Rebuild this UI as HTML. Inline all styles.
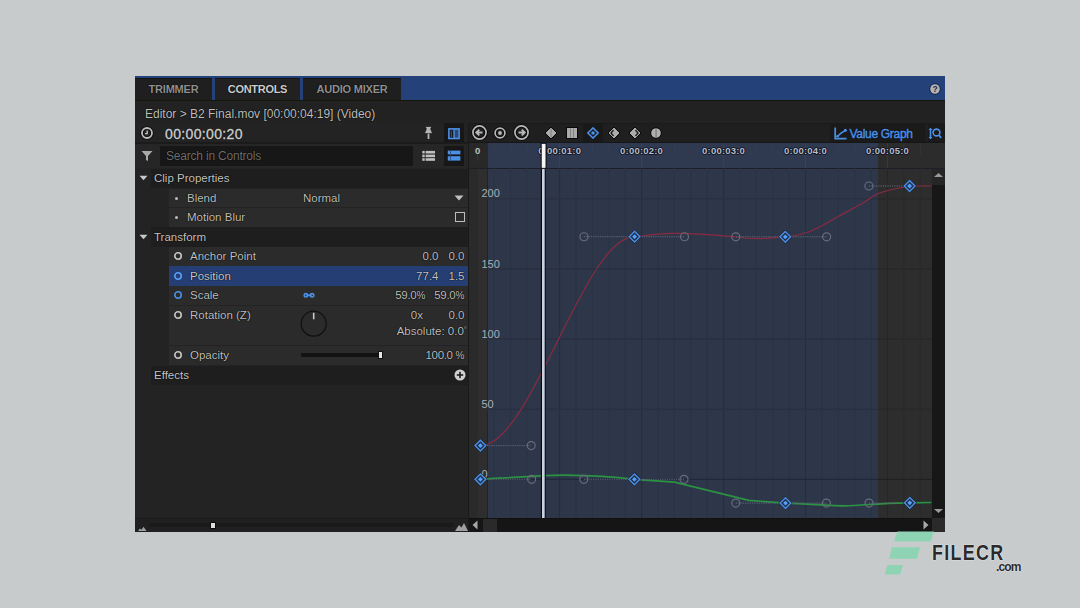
<!DOCTYPE html>
<html><head><meta charset="utf-8"><style>
html,body{margin:0;padding:0;}
body{width:1080px;height:608px;overflow:hidden;position:relative;background:#c8cbcb;font-family:"Liberation Sans", sans-serif;}
div.t{text-shadow:0 0 1px #000,0 0 1px #000;}
</style></head><body>
<div style="position:absolute;left:135px;top:76px;width:810px;height:456px;background:#232323;"></div>
<div style="position:absolute;left:135px;top:76px;width:810px;height:24px;background:#25417a;"></div>
<div style="position:absolute;left:135px;top:78px;width:77px;height:22px;background:#1f1f1f;border-top:1px solid #141414;box-sizing:border-box"></div>
<div style="position:absolute;left:215px;top:78px;width:85px;height:22px;background:#212121;border-top:1px solid #141414;box-sizing:border-box"></div>
<div style="position:absolute;left:303px;top:78px;width:98px;height:22px;background:#1f1f1f;border-top:1px solid #141414;box-sizing:border-box"></div>
<div class="t" style="position:absolute;left:135px;top:79px;height:21px;line-height:21px;width:77px;font-size:11px;font-weight:700;color:#8f8f8f;text-align:center;white-space:nowrap;letter-spacing:-0.2px">TRIMMER</div>
<div class="t" style="position:absolute;left:215px;top:79px;height:21px;line-height:21px;width:85px;font-size:11px;font-weight:700;color:#cdcdcd;text-align:center;white-space:nowrap;letter-spacing:-0.3px">CONTROLS</div>
<div class="t" style="position:absolute;left:303px;top:79px;height:21px;line-height:21px;width:98px;font-size:11px;font-weight:700;color:#8f8f8f;text-align:center;white-space:nowrap;letter-spacing:-0.2px">AUDIO MIXER</div>
<svg style="position:absolute;left:927.5px;top:81.75px" width="14" height="14" viewBox="0 0 14 14"><circle cx="7" cy="7" r="5.8" fill="#12235a"/><circle cx="7" cy="7" r="4.8" fill="#b4b4ae"/><text x="7" y="10.2" font-size="8.5" font-weight="700" text-anchor="middle" fill="#1c2a55" font-family="Liberation Sans">?</text></svg>
<div style="position:absolute;left:135px;top:100px;width:810px;height:23px;background:#222222;"></div>
<div style="position:absolute;left:135px;top:100px;width:810px;height:1px;background:#17160f;"></div>
<div class="t" style="position:absolute;left:145px;top:103px;height:22px;line-height:22px;font-size:12px;font-weight:400;color:#bdbdbd;text-align:left;white-space:nowrap;">Editor &gt; B2 Final.mov [00:00:04:19] (Video)</div>
<div style="position:absolute;left:135px;top:123px;width:333px;height:20px;background:#232323;"></div>
<div style="position:absolute;left:135px;top:142px;width:333px;height:2px;background:#1b1b1b;"></div>
<svg style="position:absolute;left:140px;top:126px" width="14" height="14" viewBox="0 0 14 14"><circle cx="7" cy="7" r="5" fill="none" stroke="#0a0a0a" stroke-width="3.6"/><circle cx="7" cy="7" r="5" fill="none" stroke="#bdbdbd" stroke-width="1.8"/><path d="M7.2 4.6 V7.6 H5" fill="none" stroke="#bdbdbd" stroke-width="1.4"/></svg>
<div class="t" style="position:absolute;left:165px;top:123.5px;height:20px;line-height:20px;font-size:14px;font-weight:400;color:#cfcfcf;text-align:left;white-space:nowrap;letter-spacing:0.35px;-webkit-text-stroke:0.35px #cfcfcf">00:00:00:20</div>
<svg style="position:absolute;left:423px;top:125px" width="11" height="15" viewBox="0 0 11 15"><path d="M2.2 1.5 H8.8 L7.6 4 L9.6 8.6 H1.4 L3.4 4 Z" fill="#b4b4b4" stroke="#0e0e0e" stroke-width="0.6"/><rect x="4.6" y="8.6" width="1.8" height="5.4" fill="#b4b4b4"/></svg>
<div style="position:absolute;left:444px;top:123px;width:20px;height:19px;background:#171717;"></div>
<svg style="position:absolute;left:447px;top:127px" width="14" height="13" viewBox="0 0 14 13"><rect x="7" y="1.5" width="4.5" height="9.5" fill="#2c4a78"/><rect x="1.9" y="1.9" width="10.2" height="9.6" fill="none" stroke="#4a90e6" stroke-width="1.6"/><rect x="6.3" y="2" width="1.4" height="9.4" fill="#4a90e6"/><rect x="3.8" y="3.5" width="1" height="6.5" fill="#3a5a8a"/></svg>
<div style="position:absolute;left:135px;top:144px;width:333px;height:24px;background:#262626;"></div>
<svg style="position:absolute;left:140px;top:149px" width="14" height="13" viewBox="0 0 14 13"><path d="M1.5 2 H12.5 L8 7 V12 L6 11 V7 Z" fill="#a9a9a9"/></svg>
<div style="position:absolute;left:160px;top:146px;width:253px;height:20px;background:#171717;"></div>
<div class="t" style="position:absolute;left:166px;top:146px;height:20px;line-height:20px;font-size:12px;font-weight:400;color:#6e6e6e;text-align:left;white-space:nowrap;letter-spacing:-0.2px">Search in Controls</div>
<svg style="position:absolute;left:421px;top:149px" width="15" height="13" viewBox="0 0 15 13"><rect x="1.3" y="1.9" width="2.4" height="2.6" fill="#c0c0c0"/><rect x="4.6" y="1.9" width="9.4" height="2.6" fill="#c0c0c0"/><rect x="1.3" y="5.6" width="2.4" height="2.6" fill="#c0c0c0"/><rect x="4.6" y="5.6" width="9.4" height="2.6" fill="#c0c0c0"/><rect x="1.3" y="9.2" width="2.4" height="2.6" fill="#c0c0c0"/><rect x="4.6" y="9.2" width="9.4" height="2.6" fill="#c0c0c0"/></svg>
<div style="position:absolute;left:444px;top:146px;width:20px;height:20px;background:#171717;"></div>
<svg style="position:absolute;left:447px;top:149px" width="15" height="13" viewBox="0 0 15 13"><rect x="0.8" y="1.6" width="12.6" height="3.8" fill="#4a90e6"/><rect x="0.8" y="7.2" width="12.6" height="4.4" fill="#4a90e6"/><rect x="3" y="1.6" width="0.8" height="10" fill="#2a4a78"/></svg>
<div style="position:absolute;left:151px;top:169px;width:317px;height:19px;background:#1e1e1e;"></div>
<svg style="position:absolute;left:139px;top:175px" width="9" height="6" viewBox="0 0 9 6"><path d="M0.5 0.8 H8.5 L4.5 5.2 Z" fill="#c8c8c8"/></svg>
<div class="t" style="position:absolute;left:154px;top:169px;height:19px;line-height:19px;font-size:11.5px;font-weight:400;color:#c2c2c2;text-align:left;white-space:nowrap;">Clip Properties</div>
<div style="position:absolute;left:169px;top:189px;width:299px;height:18px;background:#2b2b2b;"></div>
<div style="position:absolute;left:175px;top:196.5px;width:3px;height:3px;background:#bbbbbb;border-radius:50%"></div>
<div class="t" style="position:absolute;left:187px;top:189px;height:18px;line-height:18px;font-size:11.5px;font-weight:400;color:#bebebe;text-align:left;white-space:nowrap;">Blend</div>
<div class="t" style="position:absolute;left:303px;top:189px;height:18px;line-height:18px;font-size:11.5px;font-weight:400;color:#bebebe;text-align:left;white-space:nowrap;">Normal</div>
<svg style="position:absolute;left:454px;top:195px" width="10" height="6" viewBox="0 0 10 6"><path d="M0.5 0.5 H9.5 L5 5.5 Z" fill="#c0c0c0"/></svg>
<div style="position:absolute;left:169px;top:208px;width:299px;height:19px;background:#2b2b2b;"></div>
<div style="position:absolute;left:175px;top:215.5px;width:3px;height:3px;background:#bbbbbb;border-radius:50%"></div>
<div class="t" style="position:absolute;left:187px;top:208px;height:19px;line-height:19px;font-size:11.5px;font-weight:400;color:#bebebe;text-align:left;white-space:nowrap;">Motion Blur</div>
<div style="position:absolute;left:455px;top:212px;width:10px;height:10px;background:transparent;box-sizing:border-box;border:1.3px solid #bdbdbd"></div>
<div style="position:absolute;left:151px;top:227px;width:317px;height:20px;background:#1e1e1e;"></div>
<svg style="position:absolute;left:139px;top:234px" width="9" height="6" viewBox="0 0 9 6"><path d="M0.5 0.8 H8.5 L4.5 5.2 Z" fill="#c8c8c8"/></svg>
<div class="t" style="position:absolute;left:154px;top:227px;height:20px;line-height:20px;font-size:11.5px;font-weight:400;color:#c2c2c2;text-align:left;white-space:nowrap;">Transform</div>
<div style="position:absolute;left:169px;top:247px;width:299px;height:19px;background:#2b2b2b;"></div>
<svg style="position:absolute;left:173px;top:251px" width="10" height="10" viewBox="0 0 10 10"><circle cx="5" cy="5" r="3.2" fill="none" stroke="#c6c6c6" stroke-width="1.6"/></svg>
<div class="t" style="position:absolute;left:190px;top:247px;height:19px;line-height:19px;font-size:11.5px;font-weight:400;color:#bebebe;text-align:left;white-space:nowrap;">Anchor Point</div>
<div class="t" style="position:absolute;right:641.5px;top:247px;height:19px;line-height:19px;font-size:11.5px;font-weight:400;color:#bebebe;white-space:nowrap;">0.0</div>
<div class="t" style="position:absolute;right:615.5px;top:247px;height:19px;line-height:19px;font-size:11.5px;font-weight:400;color:#bebebe;white-space:nowrap;">0.0</div>
<div style="position:absolute;left:169px;top:266px;width:299px;height:20px;background:#253e74;"></div>
<svg style="position:absolute;left:173px;top:271px" width="10" height="10" viewBox="0 0 10 10"><circle cx="5" cy="5" r="3.2" fill="none" stroke="#58a0f5" stroke-width="1.6"/></svg>
<div class="t" style="position:absolute;left:190px;top:266px;height:20px;line-height:20px;font-size:11.5px;font-weight:400;color:#c8c8c8;text-align:left;white-space:nowrap;">Position</div>
<div class="t" style="position:absolute;right:641.5px;top:266px;height:20px;line-height:20px;font-size:11.5px;font-weight:400;color:#c4c4c4;white-space:nowrap;">77.4</div>
<div class="t" style="position:absolute;right:615.5px;top:266px;height:20px;line-height:20px;font-size:11.5px;font-weight:400;color:#c4c4c4;white-space:nowrap;">1.5</div>
<div style="position:absolute;left:169px;top:286px;width:299px;height:19px;background:#2b2b2b;"></div>
<svg style="position:absolute;left:173px;top:290px" width="10" height="10" viewBox="0 0 10 10"><circle cx="5" cy="5" r="3.2" fill="none" stroke="#4a90e6" stroke-width="1.6"/></svg>
<div class="t" style="position:absolute;left:190px;top:286px;height:19px;line-height:19px;font-size:11.5px;font-weight:400;color:#bebebe;text-align:left;white-space:nowrap;">Scale</div>
<svg style="position:absolute;left:302.5px;top:292px" width="12" height="7" viewBox="0 0 12 7"><circle cx="2.9" cy="3.3" r="1.7" fill="none" stroke="#4a90e6" stroke-width="1.6"/><circle cx="9.1" cy="3.3" r="1.7" fill="none" stroke="#4a90e6" stroke-width="1.6"/><rect x="3.5" y="2.4" width="5" height="1.8" fill="#4a90e6"/></svg>
<div class="t" style="position:absolute;right:655px;top:286px;height:19px;line-height:19px;font-size:11.5px;font-weight:400;color:#bebebe;white-space:nowrap;letter-spacing:-0.3px">59.0<span style="font-size:10px;letter-spacing:-0.3px">%</span></div>
<div class="t" style="position:absolute;right:616px;top:286px;height:19px;line-height:19px;font-size:11.5px;font-weight:400;color:#bebebe;white-space:nowrap;letter-spacing:-0.3px">59.0<span style="font-size:10px;letter-spacing:-0.3px">%</span></div>
<div style="position:absolute;left:169px;top:306px;width:299px;height:39px;background:#2b2b2b;"></div>
<svg style="position:absolute;left:173px;top:310px" width="10" height="10" viewBox="0 0 10 10"><circle cx="5" cy="5" r="3.2" fill="none" stroke="#c6c6c6" stroke-width="1.6"/></svg>
<div class="t" style="position:absolute;left:190px;top:306px;height:19px;line-height:19px;font-size:11.5px;font-weight:400;color:#bebebe;text-align:left;white-space:nowrap;">Rotation (Z)</div>
<svg style="position:absolute;left:299px;top:309px" width="30" height="30" viewBox="0 0 30 30"><circle cx="14.7" cy="14.7" r="12.5" fill="none" stroke="#111" stroke-width="1.3"/><rect x="13.9" y="3.8" width="1.6" height="6.5" fill="#c8c8c8"/></svg>
<div class="t" style="position:absolute;right:657px;top:306px;height:19px;line-height:19px;font-size:11.5px;font-weight:400;color:#bebebe;white-space:nowrap;">0x</div>
<div class="t" style="position:absolute;right:615.5px;top:306px;height:19px;line-height:19px;font-size:11.5px;font-weight:400;color:#bebebe;white-space:nowrap;">0.0</div>
<div class="t" style="position:absolute;right:613px;top:319.5px;height:19px;line-height:19px;font-size:11.5px;font-weight:400;color:#bebebe;white-space:nowrap;">Absolute: 0.0<span style="font-size:8px;vertical-align:3px">&#176;</span></div>
<div style="position:absolute;left:169px;top:346px;width:299px;height:19px;background:#2b2b2b;"></div>
<svg style="position:absolute;left:173px;top:350px" width="10" height="10" viewBox="0 0 10 10"><circle cx="5" cy="5" r="3.2" fill="none" stroke="#c6c6c6" stroke-width="1.6"/></svg>
<div class="t" style="position:absolute;left:190px;top:346px;height:19px;line-height:19px;font-size:11.5px;font-weight:400;color:#bebebe;text-align:left;white-space:nowrap;">Opacity</div>
<div style="position:absolute;left:301px;top:353px;width:82px;height:4px;background:#121212;"></div>
<div style="position:absolute;left:378px;top:351px;width:5px;height:8px;background:#e6e6e6;box-sizing:border-box;border:1px solid #111"></div>
<div class="t" style="position:absolute;right:616px;top:346px;height:19px;line-height:19px;font-size:11.5px;font-weight:400;color:#bebebe;white-space:nowrap;letter-spacing:-0.35px">100.0 <span style="font-size:10px">%</span></div>
<div style="position:absolute;left:151px;top:366px;width:317px;height:19px;background:#1e1e1e;"></div>
<div class="t" style="position:absolute;left:154px;top:366px;height:19px;line-height:19px;font-size:11.5px;font-weight:400;color:#c4c4c4;text-align:left;white-space:nowrap;">Effects</div>
<svg style="position:absolute;left:454px;top:369px" width="12" height="12" viewBox="0 0 12 12"><circle cx="6" cy="6" r="5.5" fill="#d0d0d0"/><rect x="2.8" y="5.2" width="6.4" height="1.6" fill="#1e1e1e"/><rect x="5.2" y="2.8" width="1.6" height="6.4" fill="#1e1e1e"/></svg>
<div style="position:absolute;left:135px;top:518px;width:333px;height:14px;background:#202020;"></div>
<div style="position:absolute;left:135px;top:518px;width:333px;height:1px;background:#1a1a1a;"></div>
<div style="position:absolute;left:149px;top:523px;width:305px;height:4px;background:#1a1a1a;"></div>
<div style="position:absolute;left:210px;top:521.5px;width:6px;height:7px;background:#dddddd;box-sizing:border-box;border:1px solid #0d0d0d"></div>
<svg style="position:absolute;left:137.5px;top:526px" width="9" height="5" viewBox="0 0 9 5"><path d="M0 5 L2 2.5 L3.5 3.8 L5.5 0.8 L8.5 5 Z" fill="#a0a0a0"/></svg>
<svg style="position:absolute;left:455px;top:522px" width="13" height="9" viewBox="0 0 13 9"><path d="M0 9 L4 3 L6.5 5.5 L9 1 L13 9 Z" fill="#a0a0a0"/></svg>
<div style="position:absolute;left:468px;top:123px;width:1px;height:409px;background:#1a1a1a;"></div>
<div style="position:absolute;left:469px;top:123px;width:476px;height:20px;background:#1f1f1f;"></div>
<div style="position:absolute;left:469px;top:122.6px;width:476px;height:1px;background:#1a1a1a;"></div>
<div style="position:absolute;left:469px;top:142px;width:476px;height:1px;background:#161616;"></div>
<svg style="position:absolute;left:470.7px;top:124.30000000000001px" width="17" height="17" viewBox="0 0 17 17"><circle cx="8.5" cy="8.5" r="6.6" fill="none" stroke="#080808" stroke-width="3.4"/><circle cx="8.5" cy="8.5" r="6.6" fill="none" stroke="#b8b8b8" stroke-width="1.7"/><path d="M11.5 8.5 H5.5 M8.3 5.6 L5.3 8.5 L8.3 11.4" fill="none" stroke="#b8b8b8" stroke-width="1.9"/></svg>
<svg style="position:absolute;left:493.3px;top:125.8px" width="14" height="14" viewBox="0 0 14 14"><circle cx="7" cy="7" r="4.9" fill="none" stroke="#080808" stroke-width="3.4"/><circle cx="7" cy="7" r="4.9" fill="none" stroke="#b8b8b8" stroke-width="1.7"/><circle cx="7" cy="7" r="1.9" fill="#b8b8b8"/></svg>
<svg style="position:absolute;left:512.5px;top:124.30000000000001px" width="17" height="17" viewBox="0 0 17 17"><circle cx="8.5" cy="8.5" r="6.6" fill="none" stroke="#080808" stroke-width="3.4"/><circle cx="8.5" cy="8.5" r="6.6" fill="none" stroke="#b8b8b8" stroke-width="1.7"/><path d="M5.5 8.5 H11.5 M8.7 5.6 L11.7 8.5 L8.7 11.4" fill="none" stroke="#b8b8b8" stroke-width="1.9"/></svg>
<svg style="position:absolute;left:543.6px;top:125.6px" width="14" height="14" viewBox="0 0 14 14"><path d="M7 1 L13 7 L7 13 L1 7 Z" fill="#ababab" stroke="#080808" stroke-width="1"/><rect x="6.6" y="2" width="0.9" height="10" fill="#7a7a7a"/></svg>
<svg style="position:absolute;left:565.5px;top:126.5px" width="12" height="12" viewBox="0 0 12 12"><rect x="0.5" y="0.5" width="11" height="11" fill="#ababab" stroke="#080808" stroke-width="1"/><rect x="4.2" y="1.5" width="0.8" height="9" fill="#7a7a7a"/><rect x="7" y="1.5" width="0.8" height="9" fill="#7a7a7a"/></svg>
<div style="position:absolute;left:583px;top:123px;width:20px;height:19px;background:#191919;"></div>
<svg style="position:absolute;left:587px;top:126.6px" width="12" height="12" viewBox="0 0 12 12"><path d="M6 0.9 L11.1 6 L6 11.1 L0.9 6 Z" fill="none" stroke="#4a90e6" stroke-width="1.5"/><circle cx="6" cy="6" r="1.8" fill="#4a90e6"/></svg>
<svg style="position:absolute;left:606.6px;top:125.6px" width="14" height="14" viewBox="0 0 14 14"><path d="M7 1 L13 7 L7 13 L1 7 Z" fill="#ababab" stroke="#080808" stroke-width="1"/><path d="M6.5 4 L4 7 L6.5 10" fill="none" stroke="#1f1f1f" stroke-width="1.4"/></svg>
<svg style="position:absolute;left:628px;top:125.6px" width="14" height="14" viewBox="0 0 14 14"><path d="M7 1 L13 7 L7 13 L1 7 Z" fill="#ababab" stroke="#080808" stroke-width="1"/><path d="M7.5 4 L10 7 L7.5 10" fill="none" stroke="#1f1f1f" stroke-width="1.4"/></svg>
<svg style="position:absolute;left:650.1px;top:126.6px" width="12" height="12" viewBox="0 0 12 12"><circle cx="6" cy="6" r="5.3" fill="#b0b0b0" stroke="#080808" stroke-width="1"/><rect x="5.6" y="1" width="0.9" height="10" fill="#666"/></svg>
<div style="position:absolute;left:830px;top:123px;width:95px;height:19px;background:#1a1a1a;"></div>
<svg style="position:absolute;left:834px;top:127px" width="14" height="13" viewBox="0 0 14 13"><path d="M1.2 0.5 V11.6 H12.5" fill="none" stroke="#4a90e6" stroke-width="1.7"/><path d="M3.6 9.3 L7 6.2 L11.5 3.3" fill="none" stroke="#4a90e6" stroke-width="1.5"/><circle cx="3.6" cy="9.3" r="1.3" fill="#4a90e6"/><circle cx="11.4" cy="3.3" r="1.5" fill="#4a90e6"/></svg>
<div class="t" style="position:absolute;left:849.5px;top:124.5px;height:19px;line-height:19px;font-size:12px;font-weight:400;color:#4a90e6;text-align:left;white-space:nowrap;letter-spacing:-0.3px;-webkit-text-stroke:0.45px #4a90e6">Value Graph</div>
<div style="position:absolute;left:928px;top:123px;width:17px;height:19px;background:#1a1a1a;"></div>
<svg style="position:absolute;left:927.5px;top:126.5px" width="14" height="14" viewBox="0 0 14 14"><path d="M2.5 1.8 V11.2" stroke="#4a90e6" stroke-width="1.6"/><path d="M0.5 3 L2.5 0.8 L4.5 3 Z M0.5 10 L2.5 12.2 L4.5 10 Z" fill="#4a90e6"/><circle cx="8.5" cy="5.5" r="3.4" fill="none" stroke="#4a90e6" stroke-width="1.6"/><path d="M10.8 8 L13.2 10.8" stroke="#4a90e6" stroke-width="1.8"/></svg>
<div style="position:absolute;left:469px;top:143px;width:463px;height:25px;background:#282828;"></div>
<div style="position:absolute;left:487.5px;top:143px;width:390.5px;height:25px;background:#2f3a50;"></div>
<div style="position:absolute;left:878px;top:143px;width:67px;height:25px;background:#2c2c2c;"></div>
<div style="position:absolute;left:932px;top:169px;width:13px;height:363px;background:#171717;"></div>
<div style="position:absolute;left:932px;top:169px;width:13px;height:16px;background:#262626;"></div>
<div style="position:absolute;left:469px;top:168px;width:9px;height:350px;background:#2a2a2a;"></div>
<div style="position:absolute;left:478px;top:168px;width:9px;height:350px;background:#2e2e2e;"></div>
<div style="position:absolute;left:487.5px;top:168px;width:390.5px;height:350px;background:#2e374a;"></div>
<div style="position:absolute;left:878px;top:168px;width:54px;height:350px;background:#2d2d2d;"></div>
<div style="position:absolute;left:469px;top:167.8px;width:476px;height:1.7px;background:#1c1f26;"></div>
<svg style="position:absolute;left:469px;top:143px" width="463" height="375" viewBox="0 0 463 375"><rect x="24.59" y="25" width="1" height="350" fill="#2a3345"/><rect x="40.99" y="25" width="1" height="350" fill="#2a3345"/><rect x="57.38" y="25" width="1" height="350" fill="#2a3345"/><rect x="73.78" y="25" width="1" height="350" fill="#2a3345"/><rect x="90.17" y="25" width="1" height="350" fill="#262d3c"/><rect x="106.56" y="25" width="1" height="350" fill="#2a3345"/><rect x="122.96" y="25" width="1" height="350" fill="#2a3345"/><rect x="139.35" y="25" width="1" height="350" fill="#2a3345"/><rect x="155.75" y="25" width="1" height="350" fill="#2a3345"/><rect x="172.14" y="25" width="1" height="350" fill="#262d3c"/><rect x="188.53" y="25" width="1" height="350" fill="#2a3345"/><rect x="204.93" y="25" width="1" height="350" fill="#2a3345"/><rect x="221.32" y="25" width="1" height="350" fill="#2a3345"/><rect x="237.72" y="25" width="1" height="350" fill="#2a3345"/><rect x="254.11" y="25" width="1" height="350" fill="#262d3c"/><rect x="270.50" y="25" width="1" height="350" fill="#2a3345"/><rect x="286.90" y="25" width="1" height="350" fill="#2a3345"/><rect x="303.29" y="25" width="1" height="350" fill="#2a3345"/><rect x="319.69" y="25" width="1" height="350" fill="#2a3345"/><rect x="336.08" y="25" width="1" height="350" fill="#262d3c"/><rect x="352.47" y="25" width="1" height="350" fill="#2a3345"/><rect x="368.87" y="25" width="1" height="350" fill="#2a3345"/><rect x="385.26" y="25" width="1" height="350" fill="#2a3345"/><rect x="401.66" y="25" width="1" height="350" fill="#2a3345"/><rect x="418.05" y="25" width="1" height="350" fill="#262626"/><rect x="434.44" y="25" width="1" height="350" fill="#2a2a2a"/><rect x="450.84" y="25" width="1" height="350" fill="#2a2a2a"/><rect x="18" y="55.00" width="391" height="1.5" fill="#293041"/><rect x="409" y="55.00" width="54" height="1.5" fill="#282828"/><rect x="18" y="125.20" width="391" height="1.5" fill="#293041"/><rect x="409" y="125.20" width="54" height="1.5" fill="#282828"/><rect x="18" y="195.40" width="391" height="1.5" fill="#293041"/><rect x="409" y="195.40" width="54" height="1.5" fill="#282828"/><rect x="18" y="265.60" width="391" height="1.5" fill="#293041"/><rect x="409" y="265.60" width="54" height="1.5" fill="#282828"/><rect x="18" y="335.80" width="391" height="1" fill="#20263a"/><rect x="409" y="335.80" width="54" height="1" fill="#1f1f1f"/><text x="12.5" y="54.3" font-size="11" fill="#a8adb5" font-family="Liberation Sans">200</text><text x="12.5" y="124.5" font-size="11" fill="#a8adb5" font-family="Liberation Sans">150</text><text x="12.5" y="194.7" font-size="11" fill="#a8adb5" font-family="Liberation Sans">100</text><text x="12.5" y="264.9" font-size="11" fill="#a8adb5" font-family="Liberation Sans">50</text><text x="12.5" y="335.1" font-size="11" fill="#a8adb5" font-family="Liberation Sans">0</text><rect x="8.20" y="12" width="1" height="6" fill="#3a3a3a"/><rect x="24.59" y="0" width="1" height="12" fill="#353d50"/><rect x="40.99" y="0" width="1" height="12" fill="#353d50"/><rect x="57.38" y="0" width="1" height="12" fill="#353d50"/><rect x="73.78" y="0" width="1" height="12" fill="#353d50"/><rect x="90.17" y="0" width="1" height="25" fill="#3a4356"/><rect x="106.56" y="0" width="1" height="12" fill="#353d50"/><rect x="122.96" y="0" width="1" height="12" fill="#353d50"/><rect x="139.35" y="0" width="1" height="12" fill="#353d50"/><rect x="155.75" y="0" width="1" height="12" fill="#353d50"/><rect x="172.14" y="0" width="1" height="25" fill="#3a4356"/><rect x="188.53" y="0" width="1" height="12" fill="#353d50"/><rect x="204.93" y="0" width="1" height="12" fill="#353d50"/><rect x="221.32" y="0" width="1" height="12" fill="#353d50"/><rect x="237.72" y="0" width="1" height="12" fill="#353d50"/><rect x="254.11" y="0" width="1" height="25" fill="#3a4356"/><rect x="270.50" y="0" width="1" height="12" fill="#353d50"/><rect x="286.90" y="0" width="1" height="12" fill="#353d50"/><rect x="303.29" y="0" width="1" height="12" fill="#353d50"/><rect x="319.69" y="0" width="1" height="12" fill="#353d50"/><rect x="336.08" y="0" width="1" height="25" fill="#3a4356"/><rect x="352.47" y="0" width="1" height="12" fill="#353d50"/><rect x="368.87" y="0" width="1" height="12" fill="#353d50"/><rect x="385.26" y="0" width="1" height="12" fill="#353d50"/><rect x="401.66" y="0" width="1" height="12" fill="#353d50"/><rect x="418.05" y="0" width="1" height="25" fill="#3a3a3a"/><rect x="434.44" y="0" width="1" height="12" fill="#353535"/><rect x="450.84" y="0" width="1" height="12" fill="#353535"/><text x="90.7" y="11.2" font-size="9.5" font-weight="700" fill="#b9bec8" stroke="#0b1020" stroke-width="1.6" paint-order="stroke" stroke-linejoin="round" text-anchor="middle" font-family="Liberation Sans" letter-spacing="0.2">0:00:01:0</text><text x="172.6" y="11.2" font-size="9.5" font-weight="700" fill="#b9bec8" stroke="#0b1020" stroke-width="1.6" paint-order="stroke" stroke-linejoin="round" text-anchor="middle" font-family="Liberation Sans" letter-spacing="0.2">0:00:02:0</text><text x="254.6" y="11.2" font-size="9.5" font-weight="700" fill="#b9bec8" stroke="#0b1020" stroke-width="1.6" paint-order="stroke" stroke-linejoin="round" text-anchor="middle" font-family="Liberation Sans" letter-spacing="0.2">0:00:03:0</text><text x="336.6" y="11.2" font-size="9.5" font-weight="700" fill="#b9bec8" stroke="#0b1020" stroke-width="1.6" paint-order="stroke" stroke-linejoin="round" text-anchor="middle" font-family="Liberation Sans" letter-spacing="0.2">0:00:04:0</text><text x="418.5" y="11.2" font-size="9.5" font-weight="700" fill="#b9bec8" stroke="#0b1020" stroke-width="1.6" paint-order="stroke" stroke-linejoin="round" text-anchor="middle" font-family="Liberation Sans" letter-spacing="0.2">0:00:05:0</text><text x="8.7" y="11.2" font-size="9.5" font-weight="700" fill="#c0c0c0" text-anchor="middle" font-family="Liberation Sans">0</text><path d="M11.4 302.6 C62.2 302.6 115.0 93.7 165.6 93.7 C181.0 92.0 191.0 90.4 204.0 90.3 C231.0 90.1 251.0 92.5 267.0 94.0 C276.0 95.2 281.0 95.8 291.0 95.6 C301.0 95.3 311.0 94.0 316.3 93.8 C326.0 93.5 331.0 92.0 341.0 88.5 C351.0 84.5 361.0 78.5 370.0 73.1 L393.0 60.5 C401.0 55.5 405.0 52.0 410.0 50.2 C417.0 47.8 429.0 45.0 440.6 43.0 L462.5 43.0" fill="none" stroke="#8a2b40" stroke-width="1.2"/><path d="M11.4 336.3 C51.0 334.0 81.0 332.0 96.0 332.2 C121.0 332.5 146.0 334.0 165.4 336.3 L205.4 339.2 L279.8 357.4 L316.5 360.1 C341.0 361.0 366.0 363.0 377.0 362.8 C391.0 362.5 411.0 360.0 440.8 359.8 L462.5 359.5" fill="none" stroke="#2a9343" stroke-width="1.7"/><line x1="11.0" y1="302.6" x2="62.0" y2="302.6" stroke="#5f6574" stroke-width="1" stroke-dasharray="1.3 1"/><line x1="115.0" y1="93.7" x2="215.5" y2="93.7" stroke="#5f6574" stroke-width="1" stroke-dasharray="1.3 1"/><line x1="266.8" y1="93.8" x2="357.6" y2="93.8" stroke="#5f6574" stroke-width="1" stroke-dasharray="1.3 1"/><line x1="399.9" y1="43.0" x2="440.6" y2="43.0" stroke="#5f6574" stroke-width="1" stroke-dasharray="1.3 1"/><line x1="11.0" y1="336.3" x2="62.0" y2="336.3" stroke="#5f6574" stroke-width="1" stroke-dasharray="1.3 1"/><line x1="115.0" y1="336.3" x2="215.0" y2="336.3" stroke="#5f6574" stroke-width="1" stroke-dasharray="1.3 1"/><line x1="266.8" y1="360.1" x2="357.4" y2="360.1" stroke="#5f6574" stroke-width="1" stroke-dasharray="1.3 1"/><line x1="400.0" y1="360.1" x2="440.8" y2="360.1" stroke="#5f6574" stroke-width="1" stroke-dasharray="1.3 1"/><circle cx="62.2" cy="302.6" r="4" fill="none" stroke="#686d7b" stroke-width="1.15"/><circle cx="115.0" cy="93.7" r="4" fill="none" stroke="#686d7b" stroke-width="1.15"/><circle cx="215.5" cy="93.7" r="4" fill="none" stroke="#686d7b" stroke-width="1.15"/><circle cx="266.8" cy="93.8" r="4" fill="none" stroke="#686d7b" stroke-width="1.15"/><circle cx="357.6" cy="93.8" r="4" fill="none" stroke="#686d7b" stroke-width="1.15"/><circle cx="399.9" cy="43.0" r="4" fill="none" stroke="#686d7b" stroke-width="1.15"/><circle cx="62.6" cy="336.3" r="4" fill="none" stroke="#686d7b" stroke-width="1.15"/><circle cx="114.8" cy="336.3" r="4" fill="none" stroke="#686d7b" stroke-width="1.15"/><circle cx="215.0" cy="336.3" r="4" fill="none" stroke="#686d7b" stroke-width="1.15"/><circle cx="266.8" cy="360.1" r="4" fill="none" stroke="#686d7b" stroke-width="1.15"/><circle cx="357.4" cy="360.1" r="4" fill="none" stroke="#686d7b" stroke-width="1.15"/><circle cx="400.0" cy="360.1" r="4" fill="none" stroke="#686d7b" stroke-width="1.15"/><path d="M11.4 296.0 L18.0 302.6 L11.4 309.2 L4.8 302.6 Z" fill="none" stroke="#151a28" stroke-width="1"/><path d="M11.4 297.2 L16.8 302.6 L11.4 308.0 L6.0 302.6 Z" fill="#223049" stroke="#4a8fe6" stroke-width="1.4"/><path d="M11.4 300.2 L13.8 302.6 L11.4 305.0 L9.0 302.6 Z" fill="#56a0ff"/><path d="M165.6 87.1 L172.2 93.7 L165.6 100.3 L159.0 93.7 Z" fill="none" stroke="#151a28" stroke-width="1"/><path d="M165.6 88.3 L171.0 93.7 L165.6 99.1 L160.2 93.7 Z" fill="#223049" stroke="#4a8fe6" stroke-width="1.4"/><path d="M165.6 91.3 L168.0 93.7 L165.6 96.1 L163.2 93.7 Z" fill="#56a0ff"/><path d="M316.3 87.2 L322.9 93.8 L316.3 100.4 L309.7 93.8 Z" fill="none" stroke="#151a28" stroke-width="1"/><path d="M316.3 88.4 L321.7 93.8 L316.3 99.2 L310.9 93.8 Z" fill="#223049" stroke="#4a8fe6" stroke-width="1.4"/><path d="M316.3 91.4 L318.7 93.8 L316.3 96.2 L313.9 93.8 Z" fill="#56a0ff"/><path d="M440.6 36.4 L447.2 43.0 L440.6 49.6 L434.0 43.0 Z" fill="none" stroke="#151a28" stroke-width="1"/><path d="M440.6 37.6 L446.0 43.0 L440.6 48.4 L435.2 43.0 Z" fill="#223049" stroke="#4a8fe6" stroke-width="1.4"/><path d="M440.6 40.6 L443.0 43.0 L440.6 45.4 L438.2 43.0 Z" fill="#56a0ff"/><path d="M11.4 329.7 L18.0 336.3 L11.4 342.9 L4.8 336.3 Z" fill="none" stroke="#151a28" stroke-width="1"/><path d="M11.4 330.9 L16.8 336.3 L11.4 341.7 L6.0 336.3 Z" fill="#223049" stroke="#4a8fe6" stroke-width="1.4"/><path d="M11.4 333.9 L13.8 336.3 L11.4 338.7 L9.0 336.3 Z" fill="#56a0ff"/><path d="M165.4 329.7 L172.0 336.3 L165.4 342.9 L158.8 336.3 Z" fill="none" stroke="#151a28" stroke-width="1"/><path d="M165.4 330.9 L170.8 336.3 L165.4 341.7 L160.0 336.3 Z" fill="#223049" stroke="#4a8fe6" stroke-width="1.4"/><path d="M165.4 333.9 L167.8 336.3 L165.4 338.7 L163.0 336.3 Z" fill="#56a0ff"/><path d="M316.5 353.5 L323.1 360.1 L316.5 366.7 L309.9 360.1 Z" fill="none" stroke="#151a28" stroke-width="1"/><path d="M316.5 354.7 L321.9 360.1 L316.5 365.5 L311.1 360.1 Z" fill="#223049" stroke="#4a8fe6" stroke-width="1.4"/><path d="M316.5 357.7 L318.9 360.1 L316.5 362.5 L314.1 360.1 Z" fill="#56a0ff"/><path d="M440.8 353.2 L447.4 359.8 L440.8 366.4 L434.2 359.8 Z" fill="none" stroke="#151a28" stroke-width="1"/><path d="M440.8 354.4 L446.2 359.8 L440.8 365.2 L435.4 359.8 Z" fill="#223049" stroke="#4a8fe6" stroke-width="1.4"/><path d="M440.8 357.4 L443.2 359.8 L440.8 362.2 L438.4 359.8 Z" fill="#56a0ff"/><rect x="71.9" y="25.5" width="1.1" height="349.5" fill="#03051a"/><rect x="73.0" y="25.5" width="2.8" height="349.5" fill="#cdd1da"/><rect x="75.8" y="25.5" width="1.2" height="349.5" fill="#05193d"/><rect x="72.2" y="0.3" width="4.8" height="25" fill="#f6f6f6" stroke="#050505" stroke-width="0.9"/></svg>
<svg style="position:absolute;left:932px;top:168px" width="13" height="350" viewBox="0 0 13 350"><path d="M2 9 L6.5 5 L11 9 Z" fill="#9a9a9a"/><path d="M2 341 L6.5 345 L11 341 Z" fill="#9a9a9a"/></svg>
<div style="position:absolute;left:469px;top:518px;width:463px;height:14px;background:#151515;"></div>
<div style="position:absolute;left:469px;top:518px;width:463px;height:1px;background:#111111;"></div>
<svg style="position:absolute;left:471px;top:519px" width="8" height="12" viewBox="0 0 8 12"><path d="M6.5 1.5 V10.5 L1.5 6 Z" fill="#a8a8a8"/></svg>
<div style="position:absolute;left:483px;top:519px;width:14px;height:13px;background:#2a2a2a;"></div>
<svg style="position:absolute;left:922px;top:519px" width="8" height="12" viewBox="0 0 8 12"><path d="M1.5 1.5 V10.5 L6.5 6 Z" fill="#a8a8a8"/></svg>
<div style="position:absolute;left:932px;top:518px;width:13px;height:14px;background:#2a2a2a;"></div>
<svg style="position:absolute;left:880px;top:528px" width="60" height="50" viewBox="0 0 60 50"><path d="M17.3 3.4 H54 L50.6 13.5 H14 Z" fill="#8fd3b5"/><path d="M12 19.3 H40 L37 30.7 H9 Z" fill="#8fd3b5"/><path d="M7.5 36.9 H23 L20 46.6 H4.6 Z" fill="#8fd3b5"/></svg>
<div style="position:absolute;left:932px;top:539.8px;font-size:22.4px;font-weight:700;color:#2a2a2a;letter-spacing:1.6px;line-height:26px;transform:scaleX(0.8);transform-origin:0 0;text-shadow:0 0 1.5px #fff,0 0 1px #fff">FILECR</div>
<div style="position:absolute;left:996px;top:560px;font-size:12px;font-weight:700;color:#2a2a2a;letter-spacing:-0.9px;line-height:14px;text-shadow:0 0 1.5px #fff">.com</div>
</body></html>
